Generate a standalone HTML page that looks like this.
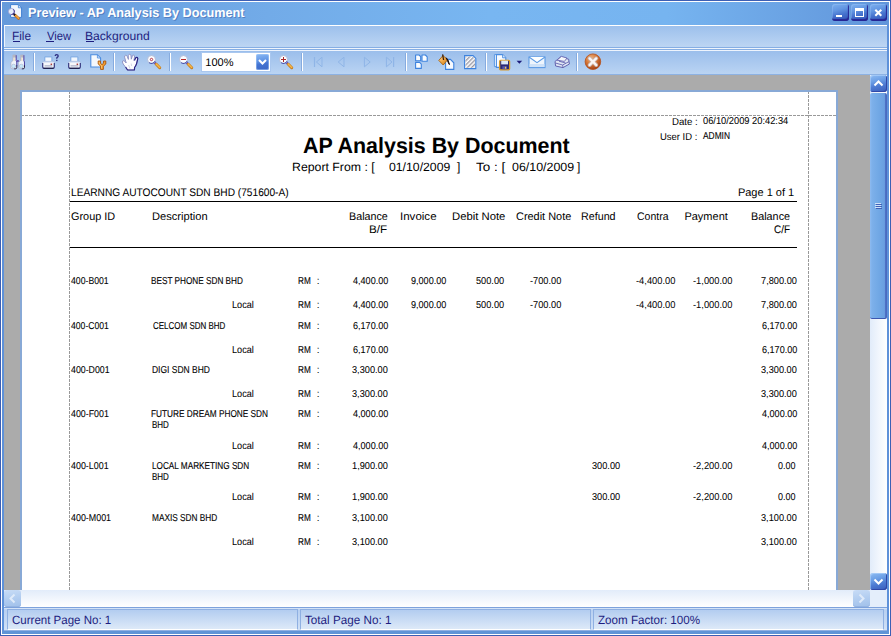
<!DOCTYPE html>
<html><head><meta charset="utf-8"><title>Preview - AP Analysis By Document</title>
<style>
*{box-sizing:border-box}
html,body{margin:0;padding:0}
body{width:891px;height:636px;overflow:hidden;background:#3d5fb4;font-family:"Liberation Sans",sans-serif;position:relative}
.a{position:absolute}
.t{position:absolute;white-space:pre;text-rendering:geometricPrecision;transform-origin:0 0;font-family:"Liberation Sans",sans-serif}
.sep{position:absolute;top:53px;width:2px;height:18px;border-left:1px solid #86abdf;border-right:1px solid #fff}
.ic{position:absolute;overflow:visible}
</style></head>
<body>
<div class="a" style="left:1px;top:1px;width:889px;height:634px;background:#fff"></div>
<div class="a" style="left:2px;top:2px;width:887px;height:632px;background:#5e91d9"></div>
<div class="a" style="left:2px;top:2px;width:887px;height:23px;background:linear-gradient(90deg,#669adb 0%,#72abe8 30%,#78b6f1 55%,#76b4f0 75%,#6195da 100%)"></div>
<div class="a" style="left:4px;top:25px;width:883px;height:22px;background:linear-gradient(180deg,#9dc0ec,#bcd5f3);border-top:1px solid #fff;border-left:1px solid #eef4fc"></div>
<div class="a" style="left:4px;top:47px;width:883px;height:1px;background:#86aee3"></div>
<div class="a" style="left:4px;top:48px;width:883px;height:1px;background:#eef4fd"></div>
<div class="a" style="left:4px;top:49px;width:883px;height:1px;background:#86aee3"></div>
<div class="a" style="left:4px;top:50px;width:883px;height:1px;background:#eef4fd"></div>
<div class="a" style="left:4px;top:51px;width:883px;height:23px;background:linear-gradient(180deg,#9bbeeb,#bad4f3)"></div>
<div class="a" style="left:4px;top:74px;width:883px;height:1px;background:#8db2e3"></div>
<div class="a" style="left:4px;top:75px;width:866px;height:515px;background:#ababab"></div>
<div class="a" style="left:20px;top:90px;width:818px;height:500px;background:#fff;border:2px solid #88a9d6;border-bottom:none"></div>
<div class="a" style="left:22px;top:115px;width:814px;height:1px;background:repeating-linear-gradient(90deg,#999 0 2px,#fff 2px 3px,#999 3px 4px)"></div>
<div class="a" style="left:69px;top:92px;width:1px;height:498px;background:repeating-linear-gradient(180deg,#999 0 2px,#fff 2px 3px,#999 3px 4px)"></div>
<div class="a" style="left:808px;top:92px;width:1px;height:498px;background:repeating-linear-gradient(180deg,#999 0 2px,#fff 2px 3px,#999 3px 4px)"></div>
<div class="a" style="left:70px;top:201px;width:727px;height:1px;background:#000"></div>
<div class="a" style="left:70px;top:247px;width:727px;height:1px;background:#000"></div>
<div class="a" style="left:870px;top:75px;width:17px;height:515px;background:linear-gradient(90deg,#e2ecfa,#fff)"></div>
<div class="a" style="left:870px;top:75px;width:17px;height:17px;border-radius:3px;background:linear-gradient(165deg,#8ebcf2 0%,#6c9fe6 35%,#4c7ad2 62%,#3a5cba 100%);box-shadow:inset -1px -1px 0 #3048a8, inset 1px 1px 0 rgba(190,220,255,.5)"></div>
<svg class="ic" style="left:870px;top:75px" width="17" height="17" viewBox="0 0 17 17"><path d="M4.5 10.5 L8.5 6.5 L12.5 10.5" fill="none" stroke="#fff" stroke-width="2"/></svg>
<div class="a" style="left:870px;top:93px;width:17px;height:226px;border-radius:2px;background:linear-gradient(90deg,#8ebbf0 0,#7db0ea 12%,#71a8e5 50%,#6a9ee0 85%,#4d70c4 91%,#4968be 100%);border-bottom:1px solid #3c57b0"></div>
<div class="a" style="left:875px;top:203px;width:6px;height:1px;background:#cfe2f8"></div>
<div class="a" style="left:876px;top:204px;width:6px;height:1px;background:#4060b8"></div>
<div class="a" style="left:875px;top:205px;width:6px;height:1px;background:#cfe2f8"></div>
<div class="a" style="left:876px;top:206px;width:6px;height:1px;background:#4060b8"></div>
<div class="a" style="left:875px;top:207px;width:6px;height:1px;background:#cfe2f8"></div>
<div class="a" style="left:876px;top:208px;width:6px;height:1px;background:#4060b8"></div>
<div class="a" style="left:870px;top:573px;width:17px;height:17px;border-radius:3px;background:linear-gradient(165deg,#8ebcf2 0%,#6c9fe6 35%,#4c7ad2 62%,#3a5cba 100%);box-shadow:inset -1px -1px 0 #3048a8, inset 1px 1px 0 rgba(190,220,255,.5)"></div>
<svg class="ic" style="left:870px;top:573px" width="17" height="17" viewBox="0 0 17 17"><path d="M4.5 6.5 L8.5 10.5 L12.5 6.5" fill="none" stroke="#fff" stroke-width="2"/></svg>
<div class="a" style="left:4px;top:590px;width:883px;height:17px;background:linear-gradient(180deg,#e2ecfa,#fff)"></div>
<div class="a" style="left:870px;top:590px;width:17px;height:17px;background:#e4eefb"></div>
<div class="a" style="left:4px;top:590px;width:17px;height:17px;border-radius:3px;background:linear-gradient(170deg,#c8dcf6 0%,#b2cdf0 50%,#a0c0ea 100%);box-shadow:inset 0 -1px 0 #94b4e2"></div>
<svg class="ic" style="left:4px;top:590px" width="17" height="17" viewBox="0 0 17 17"><path d="M10.5 4.5 L6.5 8.5 L10.5 12.5" fill="none" stroke="#dfeaf9" stroke-width="2"/></svg>
<div class="a" style="left:853px;top:590px;width:17px;height:17px;border-radius:3px;background:linear-gradient(170deg,#c8dcf6 0%,#b2cdf0 50%,#a0c0ea 100%);box-shadow:inset 0 -1px 0 #94b4e2"></div>
<svg class="ic" style="left:853px;top:590px" width="17" height="17" viewBox="0 0 17 17"><path d="M6.5 4.5 L10.5 8.5 L6.5 12.5" fill="none" stroke="#dfeaf9" stroke-width="2"/></svg>
<div class="a" style="left:4px;top:607px;width:883px;height:1px;background:#7da2dc"></div>
<div class="a" style="left:4px;top:608px;width:883px;height:23px;background:linear-gradient(180deg,#dbe8f9 0,#b8d0f1 2px,#c5d9f4 60%,#d4e3f7 100%)"></div>
<div class="a" style="left:7px;top:609px;width:291px;height:21px;background:linear-gradient(180deg,#b3cdf0,#dde9f8);border:1px solid #8fb0e2;border-bottom-color:#fff"></div>
<div class="a" style="left:300px;top:609px;width:291px;height:21px;background:linear-gradient(180deg,#b3cdf0,#dde9f8);border:1px solid #8fb0e2;border-bottom-color:#fff"></div>
<div class="a" style="left:593px;top:609px;width:291px;height:21px;background:linear-gradient(180deg,#b3cdf0,#dde9f8);border:1px solid #8fb0e2;border-bottom-color:#fff"></div>
<div class="a" style="left:4px;top:630px;width:883px;height:1px;background:#8fb0e2"></div>
<div class="a" style="left:2px;top:631px;width:887px;height:3px;background:#5f94d6"></div>
<div class="a" style="left:832px;top:4px;width:17px;height:17px;border-radius:3px;background:linear-gradient(165deg,#7db0ee 0%,#6296e2 35%,#4470cc 62%,#3253b4 100%);box-shadow:inset -1px -2px 1px #262694, inset 1px 1px 0 rgba(160,200,250,.35)"></div>
<div class="a" style="left:836px;top:15px;width:6px;height:2px;background:#fff"></div>
<div class="a" style="left:851px;top:4px;width:17px;height:17px;border-radius:3px;background:linear-gradient(165deg,#7db0ee 0%,#6296e2 35%,#4470cc 62%,#3253b4 100%);box-shadow:inset -1px -2px 1px #262694, inset 1px 1px 0 rgba(160,200,250,.35)"></div>
<div class="a" style="left:855px;top:8px;width:9px;height:9px;border:1px solid #fff;border-top-width:3px"></div>
<div class="a" style="left:870px;top:4px;width:17px;height:17px;border-radius:3px;background:linear-gradient(165deg,#7db0ee 0%,#6296e2 35%,#4470cc 62%,#3253b4 100%);box-shadow:inset -1px -2px 1px #262694, inset 1px 1px 0 rgba(160,200,250,.35)"></div>
<svg class="ic" style="left:870px;top:4px" width="17" height="17" viewBox="0 0 17 17"><path d="M5.3 5.8 L11.3 11.8 M11.3 5.8 L5.3 11.8" stroke="#fff" stroke-width="2"/></svg>
<div class="sep" style="left:33px"></div>
<div class="sep" style="left:113px"></div>
<div class="sep" style="left:169px"></div>
<div class="sep" style="left:301px"></div>
<div class="sep" style="left:405px"></div>
<div class="sep" style="left:485px"></div>
<div class="sep" style="left:576px"></div>
<div class="a" style="left:201px;top:52px;width:70px;height:20px;background:#fff;border:1px solid #a9c7ef"></div>
<div class="a" style="left:256px;top:54px;width:13px;height:16px;border-radius:2px;background:linear-gradient(170deg,#8cbaf4 0%,#6296e6 40%,#4474d2 60%,#3a66c6 100%);box-shadow:inset 0 0 0 1px rgba(170,205,250,.5)"></div>
<svg class="ic" style="left:256px;top:54px" width="13" height="16" viewBox="0 0 13 16"><path d="M3 6 L6.5 9.5 L10 6" fill="none" stroke="#fff" stroke-width="2"/></svg>
<svg class="ic" style="left:4px;top:2px" width="26" height="22" viewBox="0 0 26 22"><path d="M6.6 2.6 H14.4 L17.6 5.8 V15.4 H6.6 Z" fill="#f2f7fd" stroke="#3f80d2" stroke-width="1"/><path d="M14.4 2.6 V5.8 H17.6 Z" fill="#dce9f8" stroke="#3f80d2" stroke-width=".8"/><path d="M11.2 13.2 L14.6 16.4" stroke="#c06a1c" stroke-width="2.8" stroke-linecap="round"/><path d="M11.2 13 L14.5 16.1" stroke="#f0a43c" stroke-width="1.6" stroke-linecap="round"/><path d="M9.6 11.8 L11 13.2" stroke="#15152c" stroke-width="2"/><circle cx="7.4" cy="9.5" r="3" fill="#e4eefa" stroke="#9a9ad0" stroke-width=".8"/><path d="M9.5 7.4 A3 3 0 0 1 7.4 12.5" fill="none" stroke="#3a2c8c" stroke-width="1"/></svg>
<svg class="ic" style="left:10px;top:54px" width="17" height="16" viewBox="0 0 17 16"><g transform="translate(-0.3,0)"><g><path d="M3.2 1 H6.4 V6.6 L7 8 V13.4 Q7 14.8 5.8 14.8 H2.4 Q1.2 14.8 1.2 13.4 V8.4 L3.2 6.6 Z" fill="#eef3fa" stroke="#a9aec6" stroke-width=".7"/><rect x="3.2" y="1" width="3.2" height="2.6" fill="#b6b6c0"/><path d="M6.5 1.2 V6.6 L7.1 8 V12" fill="none" stroke="#4a3aa4" stroke-width=".9"/><path d="M7.1 11.4 V13.4 Q7 14.8 5.8 14.8 H4.4" fill="none" stroke="#1c1438" stroke-width=".9"/><circle cx="3.9" cy="12.2" r="2" fill="#c8e8fa" stroke="#a0a8c8" stroke-width=".5"/><path d="M4.4 3.8 V6.8" stroke="#f2cc98" stroke-width=".8"/></g><g transform="translate(7.7,0)"><path d="M3.2 1 H6.4 V6.6 L7 8 V13.4 Q7 14.8 5.8 14.8 H2.4 Q1.2 14.8 1.2 13.4 V8.4 L3.2 6.6 Z" fill="#eef3fa" stroke="#a9aec6" stroke-width=".7"/><rect x="3.2" y="1" width="3.2" height="2.6" fill="#b6b6c0"/><path d="M6.5 1.2 V6.6 L7.1 8 V12" fill="none" stroke="#4a3aa4" stroke-width=".9"/><path d="M7.1 11.4 V13.4 Q7 14.8 5.8 14.8 H4.4" fill="none" stroke="#1c1438" stroke-width=".9"/><circle cx="3.9" cy="12.2" r="2" fill="#c8e8fa" stroke="#a0a8c8" stroke-width=".5"/><path d="M4.4 3.8 V6.8" stroke="#f2cc98" stroke-width=".8"/></g><rect x="7.3" y="6" width="1.8" height="2" fill="#6858b0"/></g></svg>
<svg class="ic" style="left:42px;top:56px" width="14" height="14" viewBox="0 0 14 14"><path d="M2.8 5.8 V0.9 H9.9 V5.8" fill="#f2f7fe" stroke="#7aa8e4" stroke-width="1"/><path d="M0.7 6.4 Q0.7 5.4 1.8 5.4 H11.2 Q12.3 5.4 12.3 6.4 V11 Q12.3 12.3 11 12.3 H2 Q0.7 12.3 0.7 11 Z" fill="#f6f7fb" stroke="#9cb4dc" stroke-width=".8"/><path d="M0.7 7 V11 Q0.7 12.3 2 12.3 H11 Q12.3 12.3 12.3 11 V7" fill="none" stroke="#30307a" stroke-width="1.1"/><path d="M1.4 6.1 H11.6" stroke="#c8d8f0" stroke-width=".9"/><path d="M2.6 9.9 H10.3" stroke="#9aa0bc" stroke-width="1"/><path d="M1.4 12.3 H11.6" stroke="#15153c" stroke-width="1"/><rect x="8.6" y="7.6" width="1.5" height="1.3" fill="#a02828"/></svg>
<svg class="ic" style="left:54px;top:53px" width="6" height="9" viewBox="0 0 6 9"><path d="M1.2 3 Q1.2 1.6 2.7 1.6 Q4.2 1.6 4.2 3 Q4.2 4 2.8 4.8 V5.7" fill="none" stroke="#2c2c80" stroke-width="1.3"/><rect x="2.1" y="6.8" width="1.4" height="1.3" fill="#2c2c80"/></svg>
<svg class="ic" style="left:68px;top:56px" width="14" height="14" viewBox="0 0 14 14"><path d="M2.8 5.8 V0.9 H9.9 V5.8" fill="#f2f7fe" stroke="#7aa8e4" stroke-width="1"/><path d="M0.7 6.4 Q0.7 5.4 1.8 5.4 H11.2 Q12.3 5.4 12.3 6.4 V11 Q12.3 12.3 11 12.3 H2 Q0.7 12.3 0.7 11 Z" fill="#f6f7fb" stroke="#9cb4dc" stroke-width=".8"/><path d="M0.7 7 V11 Q0.7 12.3 2 12.3 H11 Q12.3 12.3 12.3 11 V7" fill="none" stroke="#30307a" stroke-width="1.1"/><path d="M1.4 6.1 H11.6" stroke="#c8d8f0" stroke-width=".9"/><path d="M2.6 9.9 H10.3" stroke="#9aa0bc" stroke-width="1"/><path d="M1.4 12.3 H11.6" stroke="#15153c" stroke-width="1"/><rect x="8.6" y="7.6" width="1.5" height="1.3" fill="#a02828"/></svg>
<svg class="ic" style="left:90px;top:54px" width="17" height="17" viewBox="0 0 17 17"><path d="M0.8 0.8 H7.4 L10.6 4 V13 H0.8 Z" fill="#f4f8fd" stroke="#4a8ce0" stroke-width="1.1"/><path d="M7.4 0.8 V4 H10.6 Z" fill="#dbe8f8" stroke="#4a8ce0" stroke-width=".8"/><path d="M8.2 7 H10.4 L10.6 9.4 L12 10.6 L13.4 9.4 L13.6 7 H15.8 V10 L13.4 12.2 V15.4 H10.6 V12.2 L8.2 10 Z" fill="#f29c30" stroke="#a8560c" stroke-width=".9" stroke-linejoin="round"/><path d="M9.3 7.8 V9.6 L11.6 11.6 V14.6" fill="none" stroke="#fbd08a" stroke-width=".8"/></svg>
<svg class="ic" style="left:121px;top:53px" width="19" height="18" viewBox="0 0 19 18"><path d="M6.6 17.0 L2.2 11.0 Q0.8 8.6 1.8 7.8 Q3.0 7.2 4.0 8.6 L5.2 10.0 L3.6 4.2 Q3.4 2.6 4.6 2.3 Q5.8 2.2 6.3 3.6 L7.4 6.4 L7.3 2.6 Q7.5 1.3 8.7 1.3 Q9.9 1.4 10.0 2.8 L10.3 6.2 L11.3 3.0 Q11.8 1.8 12.8 2.1 Q13.8 2.5 13.5 4.0 L12.9 7.4 L14.6 5.0 Q15.6 4.0 16.4 4.6 Q17.1 5.4 16.5 6.8 L15.6 10.6 Q14.8 13.0 13.6 14.4 L13.4 17.0 Z" fill="#fdfdff" stroke="#8a8cc0" stroke-width=".9" stroke-linejoin="round"/><path d="M13.5 7.4 L14.6 5 Q15.6 4 16.4 4.6 Q17.1 5.4 16.5 6.8 L15.6 10.6 Q14.8 13 13.6 14.4 L13.4 17 H6.6 L4.6 14.2" fill="none" stroke="#2c2484" stroke-width="1.2" stroke-linejoin="round"/><path d="M7.6 12 L9 15.6 M10.2 10.5 L10.6 13" stroke="#c8ccdc" stroke-width=".8"/></svg>
<svg class="ic" style="left:145px;top:53px" width="17" height="17" viewBox="0 0 17 17"><g transform="translate(0.50,0.50)"><path d="M8.4 8.4 L10.6 10.6" stroke="#6a4cb4" stroke-width="2.2"/><path d="M10.8 10.8 L14.2 14.2" stroke="#c47a18" stroke-width="3" stroke-linecap="round"/><path d="M10.8 10.6 L14.2 14" stroke="#f4b448" stroke-width="1.6" stroke-linecap="round"/><circle cx="6" cy="6" r="4" fill="#fafcff" stroke="#aab6d4" stroke-width=".9"/><path d="M9.6 7.6 A4 4 0 0 1 3.6 9.2" fill="none" stroke="#3c48a8" stroke-width="1"/><circle cx="6" cy="6" r="1.2" fill="#fff" stroke="#b02030" stroke-width="0.9"/></g></svg>
<svg class="ic" style="left:177px;top:53px" width="17" height="17" viewBox="0 0 17 17"><g transform="translate(0.50,0.50)"><path d="M8.4 8.4 L10.6 10.6" stroke="#6a4cb4" stroke-width="2.2"/><path d="M10.8 10.8 L14.2 14.2" stroke="#c47a18" stroke-width="3" stroke-linecap="round"/><path d="M10.8 10.6 L14.2 14" stroke="#f4b448" stroke-width="1.6" stroke-linecap="round"/><circle cx="6" cy="6" r="4" fill="#fafcff" stroke="#aab6d4" stroke-width=".9"/><path d="M9.6 7.6 A4 4 0 0 1 3.6 9.2" fill="none" stroke="#3c48a8" stroke-width="1"/><path d="M3.5 6 H8.5" stroke="#b82828" stroke-width="1"/></g></svg>
<svg class="ic" style="left:277px;top:53px" width="17" height="17" viewBox="0 0 17 17"><g transform="translate(0.50,0.50)"><path d="M8.4 8.4 L10.6 10.6" stroke="#6a4cb4" stroke-width="2.2"/><path d="M10.8 10.8 L14.2 14.2" stroke="#c47a18" stroke-width="3" stroke-linecap="round"/><path d="M10.8 10.6 L14.2 14" stroke="#f4b448" stroke-width="1.6" stroke-linecap="round"/><circle cx="6" cy="6" r="4" fill="#fafcff" stroke="#aab6d4" stroke-width=".9"/><path d="M9.6 7.6 A4 4 0 0 1 3.6 9.2" fill="none" stroke="#3c48a8" stroke-width="1"/><path d="M3.5 6 H8.5 M6 3.5 V8.5" stroke="#a82828" stroke-width="1"/></g></svg>
<svg class="ic" style="left:313px;top:56px" width="12" height="12" viewBox="0 0 12 12"><path d="M1.5 1 V11" stroke="#8fb5e7" stroke-width="1.2"/><path d="M9 1.2 L3.4 6 L9 10.8 Z" fill="none" stroke="#8fb5e7" stroke-width="1"/></svg>
<svg class="ic" style="left:336px;top:56px" width="12" height="12" viewBox="0 0 12 12"><path d="M8 1.2 L2.2 6 L8 10.8 Z" fill="none" stroke="#8fb5e7" stroke-width="1"/></svg>
<svg class="ic" style="left:362px;top:56px" width="12" height="12" viewBox="0 0 12 12"><path d="M2.4 1.2 L8.2 6 L2.4 10.8 Z" fill="none" stroke="#8fb5e7" stroke-width="1"/></svg>
<svg class="ic" style="left:384px;top:56px" width="12" height="12" viewBox="0 0 12 12"><path d="M2.4 1.2 L8 6 L2.4 10.8 Z" fill="none" stroke="#8fb5e7" stroke-width="1"/><path d="M9.6 1 V11" stroke="#8fb5e7" stroke-width="1.2"/></svg>
<svg class="ic" style="left:414px;top:54px" width="16" height="16" viewBox="0 0 16 16"><path d="M1.6 1 H5 L6.7 2.7 V6.8 H1.6 Z" fill="#fbfdff" stroke="#3c82de" stroke-width="1.1" stroke-linejoin="round"/><path d="M8 1 H11.4 L13.2 2.8 V7.3 H8 Z" fill="#fbfdff" stroke="#3c82de" stroke-width="1.1" stroke-linejoin="round"/><path d="M1.6 8.4 H5.6 L7.3 10.1 V14.4 H1.6 Z" fill="#fbfdff" stroke="#3c82de" stroke-width="1.1" stroke-linejoin="round"/></svg>
<svg class="ic" style="left:437px;top:53px" width="18" height="18" viewBox="0 0 18 18"><defs><linearGradient id="bk" x1="0" y1="0" x2="1" y2="1"><stop offset="0" stop-color="#fbd9a0"/><stop offset=".5" stop-color="#f0a848"/><stop offset="1" stop-color="#c87818"/></linearGradient></defs><path d="M8.6 6.4 H13.4 L16.8 9.8 V16.4 H8.6 Z" fill="#f6f9fe" stroke="#3c82de" stroke-width="1.1"/><path d="M1.8 7.4 L6 2.6 L10.6 6.8 L6.2 12 Z" fill="url(#bk)" stroke="#a8620c" stroke-width=".9" stroke-linejoin="round"/><path d="M5.6 1.4 L6.6 7" stroke="#301808" stroke-width="1.2"/><path d="M9.2 4.8 Q11.6 6.6 12.4 11.6 Q11 9.4 10.4 7.4 Z" fill="#201010" stroke="#201010" stroke-width="1"/></svg>
<svg class="ic" style="left:463px;top:54px" width="15" height="16" viewBox="0 0 15 16"><defs><pattern id="hp" width="3" height="3" patternUnits="userSpaceOnUse" patternTransform="rotate(-45)"><rect width="3" height="1.4" fill="#9898a4"/></pattern></defs><path d="M1.6 1.6 H10 L12.8 4.4 V14.6 H1.6 Z" fill="#fff" stroke="#3c82de" stroke-width="1.1"/><path d="M2.4 2.4 H9.6 L12 4.8 V13.8 H2.4 Z" fill="url(#hp)"/></svg>
<svg class="ic" style="left:493px;top:53px" width="19" height="18" viewBox="0 0 19 18"><path d="M1.4 1.6 H6 V13.6 H1.4 Z" fill="#f4f8fd" stroke="#5c9ae4" stroke-width="1"/><path d="M3.4 1.6 H9.6 L12.8 4.8 V14.4 H3.4 Z" fill="#f8fbff" stroke="#4a8ce0" stroke-width="1.1"/><path d="M9.6 1.6 V4.8 H12.8" fill="#dbe8f8" stroke="#4a8ce0" stroke-width=".9"/><rect x="6.6" y="7.4" width="10" height="9.4" rx="1" fill="#2a2a78" stroke="#d89a28" stroke-width="1.3"/><rect x="8.2" y="7.6" width="6.8" height="3.8" fill="#dce9f8"/><rect x="9.4" y="13.2" width="4.4" height="3" fill="#5858a8"/><rect x="12" y="13.8" width="1.2" height="1.8" fill="#f0d060"/></svg>
<svg class="ic" style="left:516px;top:60px" width="7" height="5" viewBox="0 0 7 5"><path d="M0.6 0.8 H6.2 L3.4 3.8 Z" fill="#1c1c7c"/></svg>
<svg class="ic" style="left:528px;top:56px" width="19" height="13" viewBox="0 0 19 13"><rect x="1" y="1" width="16" height="10.6" fill="#eef5fd" stroke="#5c9ae4" stroke-width="1.1"/><path d="M1 1 L9 6.6 L17 1" fill="#fff" stroke="#5c9ae4" stroke-width="1.1"/><rect x="1.6" y="8" width="14.8" height="3" fill="#cfe2f8"/></svg>
<svg class="ic" style="left:553px;top:55px" width="18" height="14" viewBox="0 0 18 14"><path d="M2 6.5 L7.5 2 L15.6 4.2 L16.4 9 L10 12.6 L2.6 11 Z" fill="#dfe6f4" stroke="#6464b0" stroke-width="1"/><path d="M4 5.2 L8.4 1.4 L14 3 L11.4 6.4 Z" fill="#f4f6fb" stroke="#6464b0" stroke-width=".9"/><path d="M2.4 8 L9.6 10 L16 6.6 M9.6 10 L10 12.4 M6 6.2 L12.6 8" fill="none" stroke="#6464b0" stroke-width=".9"/></svg>
<svg class="ic" style="left:584px;top:53px" width="18" height="18" viewBox="0 0 18 18"><defs><radialGradient id="rg" cx="40%" cy="30%" r="75%"><stop offset="0" stop-color="#f0b888"/><stop offset=".5" stop-color="#d47434"/><stop offset="1" stop-color="#9c3810"/></radialGradient></defs><circle cx="8.9" cy="8.7" r="7.8" fill="url(#rg)" stroke="#b85018" stroke-width=".8"/><path d="M5.6 5.4 L12.2 12 M12.2 5.4 L5.6 12" stroke="#c8aca0" stroke-width="4" stroke-linecap="round"/><path d="M5.6 5.4 L12.2 12 M12.2 5.4 L5.6 12" stroke="#fbf6f4" stroke-width="2.4" stroke-linecap="round"/></svg>
<span class="t" style="left:28.1px;top:4.0px;font-size:13px;line-height:17px;color:#fff;font-weight:bold;text-shadow:1px 1px 0 rgba(50,80,150,.45);transform:scaleX(0.975)">Preview - AP Analysis By Document</span>
<span class="t" style="left:12.1px;top:28.0px;font-size:12px;line-height:16px;color:#1e1e80;transform:scaleX(0.987)">File</span>
<span class="t" style="left:46.5px;top:28.0px;font-size:12px;line-height:16px;color:#1e1e80;transform:scaleX(0.937)">View</span>
<span class="t" style="left:85.4px;top:28.0px;font-size:12px;line-height:16px;color:#1e1e80;transform:scaleX(1.009)">Background</span>
<span class="t" style="left:205.3px;top:56.0px;font-size:11px;line-height:15px;color:#000">100%</span>
<span class="t" style="left:12.1px;top:612.0px;font-size:12px;line-height:16px;color:#1e1e80;transform:scaleX(0.960)">Current Page No: 1</span>
<span class="t" style="left:304.9px;top:612.0px;font-size:12px;line-height:16px;color:#1e1e80;transform:scaleX(0.974)">Total Page No: 1</span>
<span class="t" style="left:598.0px;top:612.0px;font-size:12px;line-height:16px;color:#1e1e80;transform:scaleX(0.969)">Zoom Factor: 100%</span>
<span class="t" style="left:303.2px;top:132.7px;font-size:22px;line-height:26px;color:#000;font-weight:bold;transform:scaleX(0.974)">AP Analysis By Document</span>
<span class="t" style="left:291.5px;top:159.3px;font-size:12px;line-height:16px;color:#000;transform:scaleX(1.025)">Report From : [</span>
<span class="t" style="left:388.6px;top:159.3px;font-size:12px;line-height:16px;color:#000;transform:scaleX(1.020)">01/10/2009</span>
<span class="t" style="left:457.0px;top:159.3px;font-size:12px;line-height:16px;color:#000">]</span>
<span class="t" style="left:476.3px;top:159.3px;font-size:12px;line-height:16px;color:#000;transform:scaleX(1.122)">To : [</span>
<span class="t" style="left:511.5px;top:159.3px;font-size:12px;line-height:16px;color:#000;transform:scaleX(1.035)">06/10/2009</span>
<span class="t" style="left:577.0px;top:159.3px;font-size:12px;line-height:16px;color:#000">]</span>
<span class="t" style="left:671.6px;top:115.5px;font-size:10px;line-height:14px;color:#000;transform:scaleX(0.966)">Date :</span>
<span class="t" style="left:702.9px;top:115.0px;font-size:10px;line-height:14px;color:#000;transform:scaleX(0.929);-webkit-text-stroke:0.05px #000">06/10/2009 20:42:34</span>
<span class="t" style="left:659.9px;top:130.5px;font-size:10px;line-height:14px;color:#000;transform:scaleX(0.945)">User ID :</span>
<span class="t" style="left:702.7px;top:130.4px;font-size:10px;line-height:14px;color:#000;transform:scaleX(0.838);-webkit-text-stroke:0.11px #000">ADMIN</span>
<span class="t" style="left:70.5px;top:185.8px;font-size:11px;line-height:15px;color:#000;transform:scaleX(0.924);-webkit-text-stroke:0.05px #000">LEARNNG AUTOCOUNT SDN BHD (751600-A)</span>
<span class="t" style="left:737.9px;top:185.8px;font-size:11px;line-height:15px;color:#000">Page 1 of 1</span>
<span class="t" style="left:71.2px;top:210.0px;font-size:11px;line-height:15px;color:#000;transform:scaleX(0.990)">Group ID</span>
<span class="t" style="left:151.6px;top:210.0px;font-size:11px;line-height:15px;color:#000;transform:scaleX(1.010)">Description</span>
<span class="t" style="left:348.7px;top:210.0px;font-size:11px;line-height:15px;color:#000;transform:scaleX(0.977)">Balance</span>
<span class="t" style="left:369.3px;top:223.0px;font-size:11px;line-height:15px;color:#000;transform:scaleX(1.061)">B/F</span>
<span class="t" style="left:399.6px;top:210.0px;font-size:11px;line-height:15px;color:#000;transform:scaleX(1.049)">Invoice</span>
<span class="t" style="left:451.6px;top:210.0px;font-size:11px;line-height:15px;color:#000;transform:scaleX(1.027)">Debit Note</span>
<span class="t" style="left:515.8px;top:210.0px;font-size:11px;line-height:15px;color:#000;transform:scaleX(0.993)">Credit Note</span>
<span class="t" style="left:580.9px;top:210.0px;font-size:11px;line-height:15px;color:#000;transform:scaleX(0.975)">Refund</span>
<span class="t" style="left:636.7px;top:210.0px;font-size:11px;line-height:15px;color:#000;transform:scaleX(0.954)">Contra</span>
<span class="t" style="left:684.4px;top:210.0px;font-size:11px;line-height:15px;color:#000">Payment</span>
<span class="t" style="left:751.0px;top:210.0px;font-size:11px;line-height:15px;color:#000;transform:scaleX(0.982)">Balance</span>
<span class="t" style="left:773.9px;top:223.0px;font-size:11px;line-height:15px;color:#000;transform:scaleX(0.905);-webkit-text-stroke:0.07px #000">C/F</span>
<span class="t" style="left:71.1px;top:275.0px;font-size:10px;line-height:14px;color:#000;transform:scaleX(0.869);-webkit-text-stroke:0.09px #000">400-B001</span>
<span class="t" style="left:151.4px;top:275.0px;font-size:10px;line-height:14px;color:#000;transform:scaleX(0.820);-webkit-text-stroke:0.13px #000">BEST PHONE SDN BHD</span>
<span class="t" style="left:297.8px;top:275.0px;font-size:10px;line-height:14px;color:#000;transform:scaleX(0.818);-webkit-text-stroke:0.13px #000">RM</span>
<span class="t" style="left:316.7px;top:275.0px;font-size:10px;line-height:14px;color:#000">:</span>
<span class="t" style="left:352.5px;top:275.0px;font-size:10px;line-height:14px;color:#000;transform:scaleX(0.907);-webkit-text-stroke:0.07px #000">4,400.00</span>
<span class="t" style="left:411.3px;top:275.0px;font-size:10px;line-height:14px;color:#000;transform:scaleX(0.907);-webkit-text-stroke:0.07px #000">9,000.00</span>
<span class="t" style="left:476.4px;top:275.0px;font-size:10px;line-height:14px;color:#000;transform:scaleX(0.919);-webkit-text-stroke:0.06px #000">500.00</span>
<span class="t" style="left:529.8px;top:275.0px;font-size:10px;line-height:14px;color:#000;transform:scaleX(0.922);-webkit-text-stroke:0.05px #000">-700.00</span>
<span class="t" style="left:636.3px;top:275.0px;font-size:10px;line-height:14px;color:#000;transform:scaleX(0.933)">-4,400.00</span>
<span class="t" style="left:693.3px;top:275.0px;font-size:10px;line-height:14px;color:#000;transform:scaleX(0.933)">-1,000.00</span>
<span class="t" style="left:761.0px;top:275.0px;font-size:10px;line-height:14px;color:#000;transform:scaleX(0.923);-webkit-text-stroke:0.05px #000">7,800.00</span>
<span class="t" style="left:231.7px;top:299.0px;font-size:10px;line-height:14px;color:#000;transform:scaleX(0.914);-webkit-text-stroke:0.06px #000">Local</span>
<span class="t" style="left:297.8px;top:299.0px;font-size:10px;line-height:14px;color:#000;transform:scaleX(0.818);-webkit-text-stroke:0.13px #000">RM</span>
<span class="t" style="left:316.7px;top:299.0px;font-size:10px;line-height:14px;color:#000">:</span>
<span class="t" style="left:352.5px;top:299.0px;font-size:10px;line-height:14px;color:#000;transform:scaleX(0.907);-webkit-text-stroke:0.07px #000">4,400.00</span>
<span class="t" style="left:411.3px;top:299.0px;font-size:10px;line-height:14px;color:#000;transform:scaleX(0.907);-webkit-text-stroke:0.07px #000">9,000.00</span>
<span class="t" style="left:476.4px;top:299.0px;font-size:10px;line-height:14px;color:#000;transform:scaleX(0.919);-webkit-text-stroke:0.06px #000">500.00</span>
<span class="t" style="left:529.8px;top:299.0px;font-size:10px;line-height:14px;color:#000;transform:scaleX(0.922);-webkit-text-stroke:0.05px #000">-700.00</span>
<span class="t" style="left:636.3px;top:299.0px;font-size:10px;line-height:14px;color:#000;transform:scaleX(0.933)">-4,400.00</span>
<span class="t" style="left:693.3px;top:299.0px;font-size:10px;line-height:14px;color:#000;transform:scaleX(0.933)">-1,000.00</span>
<span class="t" style="left:761.0px;top:299.0px;font-size:10px;line-height:14px;color:#000;transform:scaleX(0.923);-webkit-text-stroke:0.05px #000">7,800.00</span>
<span class="t" style="left:71.0px;top:320.0px;font-size:10px;line-height:14px;color:#000;transform:scaleX(0.863);-webkit-text-stroke:0.10px #000">400-C001</span>
<span class="t" style="left:152.6px;top:320.0px;font-size:10px;line-height:14px;color:#000;transform:scaleX(0.799);-webkit-text-stroke:0.14px #000">CELCOM SDN BHD</span>
<span class="t" style="left:297.8px;top:320.0px;font-size:10px;line-height:14px;color:#000;transform:scaleX(0.818);-webkit-text-stroke:0.13px #000">RM</span>
<span class="t" style="left:316.7px;top:320.0px;font-size:10px;line-height:14px;color:#000">:</span>
<span class="t" style="left:352.5px;top:320.0px;font-size:10px;line-height:14px;color:#000;transform:scaleX(0.907);-webkit-text-stroke:0.07px #000">6,170.00</span>
<span class="t" style="left:761.8px;top:320.0px;font-size:10px;line-height:14px;color:#000;transform:scaleX(0.907);-webkit-text-stroke:0.07px #000">6,170.00</span>
<span class="t" style="left:231.7px;top:344.0px;font-size:10px;line-height:14px;color:#000;transform:scaleX(0.914);-webkit-text-stroke:0.06px #000">Local</span>
<span class="t" style="left:297.8px;top:344.0px;font-size:10px;line-height:14px;color:#000;transform:scaleX(0.818);-webkit-text-stroke:0.13px #000">RM</span>
<span class="t" style="left:316.7px;top:344.0px;font-size:10px;line-height:14px;color:#000">:</span>
<span class="t" style="left:352.5px;top:344.0px;font-size:10px;line-height:14px;color:#000;transform:scaleX(0.907);-webkit-text-stroke:0.07px #000">6,170.00</span>
<span class="t" style="left:761.8px;top:344.0px;font-size:10px;line-height:14px;color:#000;transform:scaleX(0.907);-webkit-text-stroke:0.07px #000">6,170.00</span>
<span class="t" style="left:71.0px;top:364.0px;font-size:10px;line-height:14px;color:#000;transform:scaleX(0.878);-webkit-text-stroke:0.09px #000">400-D001</span>
<span class="t" style="left:151.5px;top:364.0px;font-size:10px;line-height:14px;color:#000;transform:scaleX(0.848);-webkit-text-stroke:0.11px #000">DIGI SDN BHD</span>
<span class="t" style="left:297.8px;top:364.0px;font-size:10px;line-height:14px;color:#000;transform:scaleX(0.818);-webkit-text-stroke:0.13px #000">RM</span>
<span class="t" style="left:316.7px;top:364.0px;font-size:10px;line-height:14px;color:#000">:</span>
<span class="t" style="left:351.7px;top:364.0px;font-size:10px;line-height:14px;color:#000;transform:scaleX(0.919);-webkit-text-stroke:0.06px #000">3,300.00</span>
<span class="t" style="left:761.0px;top:364.0px;font-size:10px;line-height:14px;color:#000;transform:scaleX(0.919);-webkit-text-stroke:0.06px #000">3,300.00</span>
<span class="t" style="left:231.7px;top:388.0px;font-size:10px;line-height:14px;color:#000;transform:scaleX(0.914);-webkit-text-stroke:0.06px #000">Local</span>
<span class="t" style="left:297.8px;top:388.0px;font-size:10px;line-height:14px;color:#000;transform:scaleX(0.818);-webkit-text-stroke:0.13px #000">RM</span>
<span class="t" style="left:316.7px;top:388.0px;font-size:10px;line-height:14px;color:#000">:</span>
<span class="t" style="left:351.7px;top:388.0px;font-size:10px;line-height:14px;color:#000;transform:scaleX(0.919);-webkit-text-stroke:0.06px #000">3,300.00</span>
<span class="t" style="left:761.0px;top:388.0px;font-size:10px;line-height:14px;color:#000;transform:scaleX(0.919);-webkit-text-stroke:0.06px #000">3,300.00</span>
<span class="t" style="left:70.6px;top:408.0px;font-size:10px;line-height:14px;color:#000;transform:scaleX(0.885);-webkit-text-stroke:0.08px #000">400-F001</span>
<span class="t" style="left:151.3px;top:408.0px;font-size:10px;line-height:14px;color:#000;transform:scaleX(0.826);-webkit-text-stroke:0.12px #000">FUTURE DREAM PHONE SDN</span>
<span class="t" style="left:297.8px;top:408.0px;font-size:10px;line-height:14px;color:#000;transform:scaleX(0.818);-webkit-text-stroke:0.13px #000">RM</span>
<span class="t" style="left:316.7px;top:408.0px;font-size:10px;line-height:14px;color:#000">:</span>
<span class="t" style="left:352.5px;top:408.0px;font-size:10px;line-height:14px;color:#000;transform:scaleX(0.907);-webkit-text-stroke:0.07px #000">4,000.00</span>
<span class="t" style="left:761.8px;top:408.0px;font-size:10px;line-height:14px;color:#000;transform:scaleX(0.907);-webkit-text-stroke:0.07px #000">4,000.00</span>
<span class="t" style="left:151.6px;top:419.0px;font-size:10px;line-height:14px;color:#000;transform:scaleX(0.800);-webkit-text-stroke:0.14px #000">BHD</span>
<span class="t" style="left:231.7px;top:440.0px;font-size:10px;line-height:14px;color:#000;transform:scaleX(0.914);-webkit-text-stroke:0.06px #000">Local</span>
<span class="t" style="left:297.8px;top:440.0px;font-size:10px;line-height:14px;color:#000;transform:scaleX(0.818);-webkit-text-stroke:0.13px #000">RM</span>
<span class="t" style="left:316.7px;top:440.0px;font-size:10px;line-height:14px;color:#000">:</span>
<span class="t" style="left:352.5px;top:440.0px;font-size:10px;line-height:14px;color:#000;transform:scaleX(0.907);-webkit-text-stroke:0.07px #000">4,000.00</span>
<span class="t" style="left:761.8px;top:440.0px;font-size:10px;line-height:14px;color:#000;transform:scaleX(0.907);-webkit-text-stroke:0.07px #000">4,000.00</span>
<span class="t" style="left:71.1px;top:460.0px;font-size:10px;line-height:14px;color:#000;transform:scaleX(0.889);-webkit-text-stroke:0.08px #000">400-L001</span>
<span class="t" style="left:151.6px;top:460.0px;font-size:10px;line-height:14px;color:#000;transform:scaleX(0.820);-webkit-text-stroke:0.13px #000">LOCAL MARKETING SDN</span>
<span class="t" style="left:297.8px;top:460.0px;font-size:10px;line-height:14px;color:#000;transform:scaleX(0.818);-webkit-text-stroke:0.13px #000">RM</span>
<span class="t" style="left:316.7px;top:460.0px;font-size:10px;line-height:14px;color:#000">:</span>
<span class="t" style="left:351.7px;top:460.0px;font-size:10px;line-height:14px;color:#000;transform:scaleX(0.924);-webkit-text-stroke:0.05px #000">1,900.00</span>
<span class="t" style="left:591.5px;top:460.0px;font-size:10px;line-height:14px;color:#000;transform:scaleX(0.921);-webkit-text-stroke:0.06px #000">300.00</span>
<span class="t" style="left:693.3px;top:460.0px;font-size:10px;line-height:14px;color:#000;transform:scaleX(0.933)">-2,200.00</span>
<span class="t" style="left:778.3px;top:460.0px;font-size:10px;line-height:14px;color:#000;transform:scaleX(0.897);-webkit-text-stroke:0.07px #000">0.00</span>
<span class="t" style="left:151.6px;top:471.0px;font-size:10px;line-height:14px;color:#000;transform:scaleX(0.800);-webkit-text-stroke:0.14px #000">BHD</span>
<span class="t" style="left:231.7px;top:491.0px;font-size:10px;line-height:14px;color:#000;transform:scaleX(0.914);-webkit-text-stroke:0.06px #000">Local</span>
<span class="t" style="left:297.8px;top:491.0px;font-size:10px;line-height:14px;color:#000;transform:scaleX(0.818);-webkit-text-stroke:0.13px #000">RM</span>
<span class="t" style="left:316.7px;top:491.0px;font-size:10px;line-height:14px;color:#000">:</span>
<span class="t" style="left:351.7px;top:491.0px;font-size:10px;line-height:14px;color:#000;transform:scaleX(0.924);-webkit-text-stroke:0.05px #000">1,900.00</span>
<span class="t" style="left:591.5px;top:491.0px;font-size:10px;line-height:14px;color:#000;transform:scaleX(0.921);-webkit-text-stroke:0.06px #000">300.00</span>
<span class="t" style="left:693.3px;top:491.0px;font-size:10px;line-height:14px;color:#000;transform:scaleX(0.933)">-2,200.00</span>
<span class="t" style="left:778.3px;top:491.0px;font-size:10px;line-height:14px;color:#000;transform:scaleX(0.897);-webkit-text-stroke:0.07px #000">0.00</span>
<span class="t" style="left:70.6px;top:512.0px;font-size:10px;line-height:14px;color:#000;transform:scaleX(0.889);-webkit-text-stroke:0.08px #000">400-M001</span>
<span class="t" style="left:151.7px;top:512.0px;font-size:10px;line-height:14px;color:#000;transform:scaleX(0.828);-webkit-text-stroke:0.12px #000">MAXIS SDN BHD</span>
<span class="t" style="left:297.8px;top:512.0px;font-size:10px;line-height:14px;color:#000;transform:scaleX(0.818);-webkit-text-stroke:0.13px #000">RM</span>
<span class="t" style="left:316.7px;top:512.0px;font-size:10px;line-height:14px;color:#000">:</span>
<span class="t" style="left:351.7px;top:512.0px;font-size:10px;line-height:14px;color:#000;transform:scaleX(0.919);-webkit-text-stroke:0.06px #000">3,100.00</span>
<span class="t" style="left:761.0px;top:512.0px;font-size:10px;line-height:14px;color:#000;transform:scaleX(0.919);-webkit-text-stroke:0.06px #000">3,100.00</span>
<span class="t" style="left:231.7px;top:536.0px;font-size:10px;line-height:14px;color:#000;transform:scaleX(0.914);-webkit-text-stroke:0.06px #000">Local</span>
<span class="t" style="left:297.8px;top:536.0px;font-size:10px;line-height:14px;color:#000;transform:scaleX(0.818);-webkit-text-stroke:0.13px #000">RM</span>
<span class="t" style="left:316.7px;top:536.0px;font-size:10px;line-height:14px;color:#000">:</span>
<span class="t" style="left:351.7px;top:536.0px;font-size:10px;line-height:14px;color:#000;transform:scaleX(0.919);-webkit-text-stroke:0.06px #000">3,100.00</span>
<span class="t" style="left:761.0px;top:536.0px;font-size:10px;line-height:14px;color:#000;transform:scaleX(0.919);-webkit-text-stroke:0.06px #000">3,100.00</span>
<div class="a" style="left:13px;top:41px;width:7px;height:1px;background:#1e1e80"></div><div class="a" style="left:46px;top:41px;width:8px;height:1px;background:#1e1e80"></div><div class="a" style="left:86px;top:41px;width:8px;height:1px;background:#1e1e80"></div>
</body></html>
